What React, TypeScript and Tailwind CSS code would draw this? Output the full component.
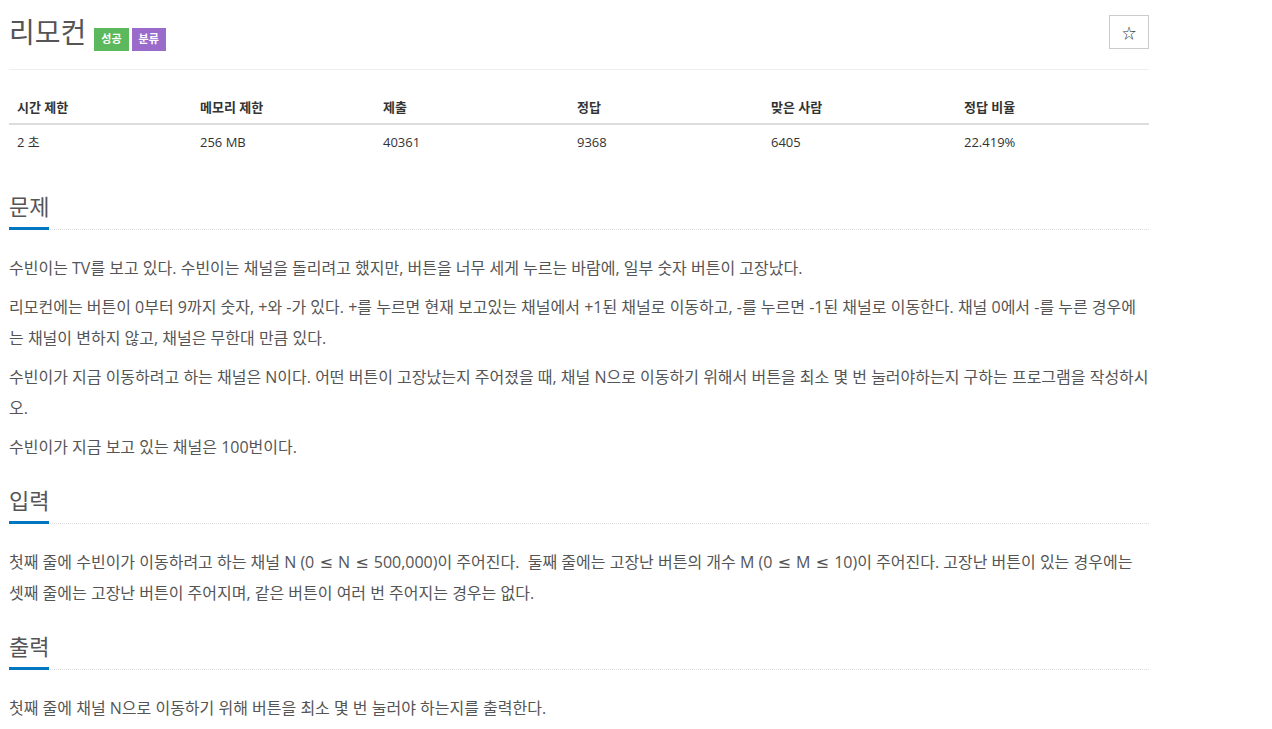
import React from 'react';

const stats = [
  { label: '시간 제한', value: '2 초', w: 'w-[183px]' },
  { label: '메모리 제한', value: '256 MB', w: 'w-[183px]' },
  { label: '제출', value: '40361', w: 'w-[194px]' },
  { label: '정답', value: '9368', w: 'w-[194px]' },
  { label: '맞은 사람', value: '6405', w: 'w-[193px]' },
  { label: '정답 비율', value: '22.419%', w: 'w-[193px]' },
];

function SectionTitle({ children }: { children: React.ReactNode }) {
  return (
    <div className="flex border-b border-dotted border-[#ddd]">
      <h2 className="mb-[-1px] border-b-[3px] border-[#0076c0] pb-[4px] text-[22px] leading-[34px] text-[#555]">
        {children}
      </h2>
    </div>
  );
}

function Para({ children }: { children: React.ReactNode }) {
  return <p className="mb-[8px] text-[16px] leading-[31px] text-[#555]">{children}</p>;
}

function Le() {
  return <span className="font-['DejaVu_Sans'] mx-[1px]">≤</span>;
}

export default function App() {
  return (
    <div
      className="min-h-screen bg-white"
      style={{ fontFamily: '"Open Sans", "Noto Sans CJK KR", sans-serif' }}
    >
      <div className="ml-[9px] w-[1140px]">
        {/* Header */}
        <div className="flex items-center justify-between border-b border-[#eee] pt-[15px] pb-[20px]">
          <div className="flex h-[34px] items-center">
            <h1 className="text-[28px] leading-[34px] text-[#555]">리모컨</h1>
            <div className="mt-[14px] ml-[8px] flex gap-[3px]">
              <span className="flex h-[23px] items-center bg-[#5cb85c] px-[7px] text-[11px] font-bold text-white">성공</span>
              <span className="flex h-[23px] items-center bg-[#9b6bcc] px-[7px] text-[11px] font-bold text-white">분류</span>
            </div>
          </div>
          <button className="flex h-[34px] w-[40px] items-center justify-center border border-[#ccc] bg-white text-[14px] text-[#333]">
            ☆
          </button>
        </div>

        {/* Stats table */}
        <div className="mt-[20px] text-[13px] text-[#333]">
          <div className="flex border-b-2 border-[#ddd]">
            {stats.map((s) => (
              <div key={s.label} className={`${s.w} px-[8px] pt-[8px] pb-[7px] font-bold leading-[18px]`}>
                {s.label}
              </div>
            ))}
          </div>
          <div className="flex">
            {stats.map((s) => (
              <div key={s.label} className={`${s.w} px-[8px] py-[8px] leading-[18px]`}>
                {s.value}
              </div>
            ))}
          </div>
        </div>

        {/* 문제 */}
        <section className="mt-[30px]">
          <SectionTitle>문제</SectionTitle>
          <div className="mt-[23px]">
            <Para>수빈이는 TV를 보고 있다. 수빈이는 채널을 돌리려고 했지만, 버튼을 너무 세게 누르는 바람에, 일부 숫자 버튼이 고장났다.</Para>
            <Para>리모컨에는 버튼이 0부터 9까지 숫자, +와 -가 있다. +를 누르면 현재 보고있는 채널에서 +1된 채널로 이동하고, -를 누르면 -1된 채널로 이동한다. 채널 0에서 -를 누른 경우에는 채널이 변하지 않고, 채널은 무한대 만큼 있다.</Para>
            <Para>수빈이가 지금 이동하려고 하는 채널은 N이다. 어떤 버튼이 고장났는지 주어졌을 때, 채널 N으로 이동하기 위해서 버튼을 최소 몇 번 눌러야하는지 구하는 프로그램을 작성하시오.</Para>
            <Para>수빈이가 지금 보고 있는 채널은 100번이다.</Para>
          </div>
        </section>

        {/* 입력 */}
        <section className="mt-[20px]">
          <SectionTitle>입력</SectionTitle>
          <div className="mt-[23px]">
            <Para>
              첫째 줄에 수빈이가 이동하려고 하는 채널 N (0 <Le /> N <Le /> 500,000)이 주어진다.&nbsp; 둘째 줄에는 고장난 버튼의 개수 M (0 <Le /> M <Le /> 10)이 주어진다. 고장난 버튼이 있는 경우에는 셋째 줄에는 고장난 버튼이 주어지며, 같은 버튼이 여러 번 주어지는 경우는 없다.
            </Para>
          </div>
        </section>

        {/* 출력 */}
        <section className="mt-[20px]">
          <SectionTitle>출력</SectionTitle>
          <div className="mt-[23px]">
            <Para>첫째 줄에 채널 N으로 이동하기 위해 버튼을 최소 몇 번 눌러야 하는지를 출력한다.</Para>
          </div>
        </section>
      </div>
    </div>
  );
}
